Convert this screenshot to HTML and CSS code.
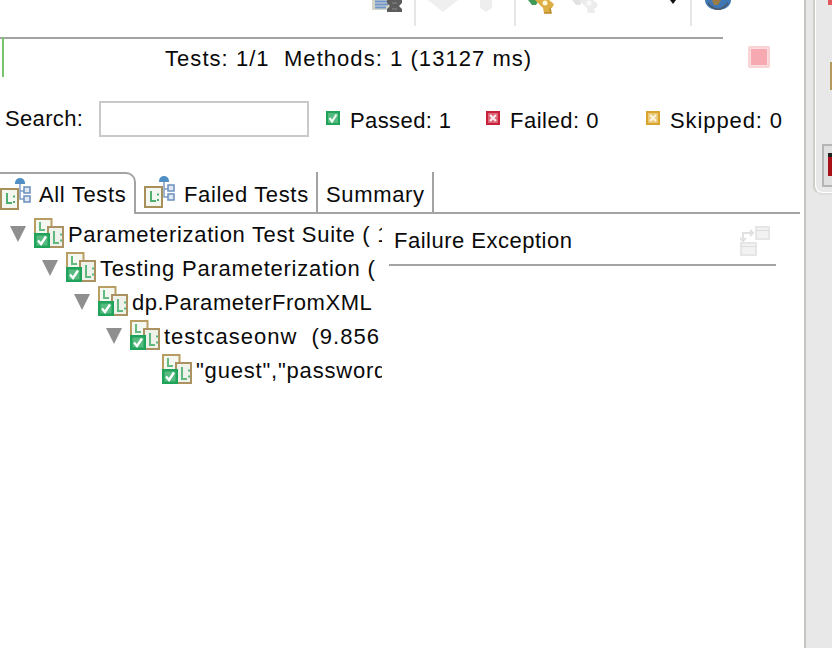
FILE: index.html
```html
<!DOCTYPE html>
<html lang="en">
<head>
<meta charset="utf-8">
<title>TestNG results</title>
<link rel="stylesheet" href="styles.css">
</head>
<body>
<svg class="defs" width="0" height="0">
  <defs>
    <symbol id="suite" viewBox="0 0 30 30">
      <rect x="1" y="1" width="16.500" height="16" fill="#f4f8f0" stroke="#b89e62" stroke-width="2"/>
      <path d="M6 4V12H11" fill="none" stroke="#63bb82" stroke-width="2"/>
      <rect x="14" y="9" width="15" height="20" fill="#eef2ea" stroke="#ab9260" stroke-width="2"/>
      <path d="M20 13V25H25M26 16.500H28M26 22.500H28" fill="none" stroke="#5fb87e" stroke-width="2"/>
      <rect x="0" y="15" width="16" height="15" fill="#1fa35a"/>
      <rect x="2.500" y="17.500" width="11" height="10" fill="#57bb80"/>
      <path d="M4 22.500L7 26L12 18.500" fill="none" stroke="#fff" stroke-width="2.400"/>
    </symbol>
    <symbol id="tabicon" viewBox="0 0 32 32">
      <rect x="1" y="11" width="17" height="20" fill="#f4f6f0" stroke="#a8905a" stroke-width="2"/>
      <path d="M7 15V25H12M13 18.500H15M13 24H15" fill="none" stroke="#4fae72" stroke-width="2"/>
      <path d="M15 5A5 5 0 0 1 25 5L25 6H15Z" fill="#4f8fc4"/>
      <path d="M20 6V21H24M20 13H24" fill="none" stroke="#7d9cc4" stroke-width="1.500"/>
      <rect x="24" y="9" width="6" height="6" fill="#dfe8f3" stroke="#6a8fbd" stroke-width="1.500"/>
      <rect x="24" y="18" width="6" height="6" fill="#dfe8f3" stroke="#6a8fbd" stroke-width="1.500"/>
    </symbol>
  </defs>
</svg>
<div class="app">
  <main class="main">
    <div class="toolbar">
      <svg class="tool tool-a" viewBox="0 0 30 12"><path d="M0 0H19V10H0Z" fill="#d4d6c8"/><path d="M3 1.500H16M3 4.500H16M3 7.500H14" stroke="#6f95cc" stroke-width="1.800"/><path d="M15 0H30V3L27 6L30 9V12H15V9L18 6L15 3Z" fill="#5c5c5c"/><path d="M20 3H25M20 9H25" stroke="#8a8a8a" stroke-width="1"/></svg>
      <span class="sep sep-a"></span>
      <svg class="tool tool-b" viewBox="0 0 30 12"><path d="M0 0H30L15 12Z" fill="#efefef"/></svg>
      <svg class="tool tool-c" viewBox="0 0 12 12"><path d="M0 0H12V8L6 12L0 8Z" fill="#eeeeee"/></svg>
      <span class="sep sep-b"></span>
      <svg class="tool tool-d" viewBox="0 0 30 14"><path d="M0 0H11L8 5H4Z" fill="#3f9a57"/><path d="M7 0H21L26 4L24 8L22 8L23 13H16L15 8Z" fill="#dcae44"/><circle cx="17" cy="3" r="2.500" fill="#fff6d8"/><path d="M22 8L23 13H16" fill="none" stroke="#b98a26" stroke-width="1.500"/></svg>
      <svg class="tool tool-e" viewBox="0 0 30 14"><path d="M0 0H11L8 5H4Z" fill="#e2e2e2"/><path d="M7 0H21L26 4L24 8L22 8L23 13H16L15 8Z" fill="#ececec"/><circle cx="17" cy="3" r="2.500" fill="#fafafa"/></svg>
      <svg class="tool tool-f" viewBox="0 0 6 4"><path d="M0 0H6L3 4Z" fill="#111"/></svg>
      <span class="sep sep-c"></span>
      <svg class="tool tool-g" viewBox="0 0 26 10"><path d="M0 0H26C26 6 20 10 13 10S0 6 0 0Z" fill="#3f77b5"/><path d="M7 0H16L13 5H9Z" fill="#9c7c45"/><path d="M3 3C6 7 9 9 13 9.500C17 9 20 7 23 3" fill="none" stroke="#4c5866" stroke-width="1.400"/></svg>
    </div>
    <div class="progress">
      <div class="summary">
        <span class="green"></span>
        <span class="counts">Tests: 1/1&nbsp;&nbsp;Methods: 1 (13127 ms)</span>
      </div>
      <span class="stop"></span>
    </div>
    <div class="search">
      <label class="search-label" for="q">Search:</label>
      <input class="search-input" id="q" type="text">
      <span class="stat stat-pass">
        <svg class="badge" viewBox="0 0 14 14"><rect width="14" height="14" fill="#1fa35a"/><rect x="2" y="2" width="10" height="10" fill="#55ba7f"/><path d="M3.500 7L6 10.500L10.500 3.500" fill="none" stroke="#eef9f1" stroke-width="2.200"/></svg>
        Passed: 1
      </span>
      <span class="stat stat-fail">
        <svg class="badge" viewBox="0 0 14 14"><rect width="14" height="14" fill="#c9213c"/><rect x="2" y="2" width="10" height="10" fill="#dc6677"/><path d="M4 4L10 10M10 4L4 10" stroke="#fbeaec" stroke-width="2.200"/></svg>
        Failed: 0
      </span>
      <span class="stat stat-skip">
        <svg class="badge" viewBox="0 0 14 14"><rect width="14" height="14" fill="#d9a32e"/><rect x="2" y="2" width="10" height="10" fill="#e9c878"/><path d="M4 4L10 10M10 4L4 10" stroke="#fdf4dc" stroke-width="2.200"/></svg>
        Skipped: 0
      </span>
    </div>
    <div class="tabs">
      <div class="tab tab-active"><svg class="tab-icon"><use href="#tabicon"/></svg>All Tests</div>
      <div class="tab tab-failed"><svg class="tab-icon"><use href="#tabicon"/></svg>Failed Tests</div>
      <div class="tab tab-summary">Summary</div>
      <div class="tab-rest"></div>
    </div>
    <div class="panes">
      <div class="tree">
        <div class="row lvl0"><span class="tri"></span><svg class="node"><use href="#suite"/></svg><span class="label">Parameterization Test Suite ( 1</span></div>
        <div class="row lvl1"><span class="tri"></span><svg class="node"><use href="#suite"/></svg><span class="label">Testing Parameterization (</span></div>
        <div class="row lvl2"><span class="tri"></span><svg class="node"><use href="#suite"/></svg><span class="label">dp.ParameterFromXML</span></div>
        <div class="row lvl3"><span class="tri"></span><svg class="node"><use href="#suite"/></svg><span class="label">testcaseonw&nbsp;&nbsp;(9.856</span></div>
        <div class="row lvl4"><span class="tri none"></span><svg class="node"><use href="#suite"/></svg><span class="label">"guest","password"</span></div>
      </div>
      <div class="detail">
        <div class="detail-head">
          <span class="detail-title">Failure Exception</span>
          <svg class="layout-icon" viewBox="0 0 30 30"><rect x="16" y="1" width="13" height="12" fill="#f2f2f2" stroke="#e6e6e6" stroke-width="2"/><path d="M16 4.500H29" stroke="#dcdcdc"/><rect x="1" y="17" width="15" height="12" fill="#f2f2f2" stroke="#e6e6e6" stroke-width="2"/><path d="M1 20.500H16" stroke="#dcdcdc"/><path d="M3 13V7H13M10 4L13 7L10 10M0 12L3 15L6 12" fill="none" stroke="#e0e0e0" stroke-width="2"/></svg>
        </div>
      </div>
    </div>
  </main>
  <aside class="side">
    <div class="side-gutter"></div>
    <div class="side-panel">
      <span class="side-red"></span>
      <span class="side-tan"></span>
      <span class="side-box"><span class="side-cap"></span><span class="side-box-in"></span></span>
    </div>
  </aside>
</div>
</body>
</html>
```

FILE: styles.css
```css
* { box-sizing: border-box; }
html, body { margin: 0; padding: 0; height: 100%; background: #fff; overflow: hidden; }
body { font-family: "Liberation Sans", Arial, sans-serif; font-size: 22px; letter-spacing: 0.5px; color: #0a0a0a; }
.defs { display: block; height: 0; }

.app { display: flex; width: 832px; height: 648px; }
.main { width: 804px; flex: none; display: flex; flex-direction: column; }

.toolbar { height: 37px; flex: none; display: flex; align-items: flex-start; padding-left: 372px; }
.tool { display: block; flex: none; }
.tool-a { width: 30px; height: 12px; }
.sep { width: 2px; height: 26px; background: #e6e6e6; flex: none; }
.sep-a { margin-left: 12px; }
.tool-b { width: 30px; height: 12px; margin-left: 12px; }
.tool-c { width: 12px; height: 12px; margin-left: 22px; }
.sep-b { margin-left: 22px; }
.tool-d { width: 30px; height: 14px; margin-left: 12px; }
.tool-e { width: 30px; height: 14px; margin-left: 14px; }
.tool-f { width: 6px; height: 4px; margin-left: 68px; }
.sep-c { margin-left: 14px; }
.tool-g { width: 26px; height: 10px; margin-left: 13px; }

.progress { height: 40px; flex: none; display: flex; align-items: flex-start; }
.summary { width: 723px; height: 40px; border-top: 2px solid #a3a3a3; display: flex; padding-left: 2px; flex: none; }
.green { width: 2px; height: 40px; margin-top: -2px; background: #79c36f; flex: none; }
.counts { margin-left: 161px; line-height: 40px; height: 38px; white-space: pre; letter-spacing: 1.05px; }
.stop { width: 22px; height: 22px; margin: 9px 0 0 25px; border: 2px solid #f8d2d5; border-radius: 2px; background: #f6a9b0; box-shadow: inset 0 0 0 1px #fbdde0; flex: none; }

.search { height: 95px; flex: none; display: flex; align-items: flex-start; padding: 24px 0 0 5px; }
.search-label { line-height: 36px; width: 94px; flex: none; letter-spacing: 0.35px; }
.search-input { width: 210px; height: 36px; border: 2px solid #c9c9c9; background: #fff; flex: none; margin: 0; padding: 0; }
.stat { display: flex; align-items: center; gap: 10px; flex: none; line-height: 40px; white-space: nowrap; }
.stat-pass { margin-left: 17px; width: 160px; letter-spacing: 0.4px; }
.stat-fail { width: 160px; }
.stat-skip { letter-spacing: 0.9px; }
.badge { width: 14px; height: 14px; flex: none; margin-bottom: 6px; }

.tabs { height: 42px; flex: none; display: flex; align-items: stretch; }
.tab { display: flex; align-items: center; white-space: nowrap; border-bottom: 2px solid #a3a3a3; flex: none; letter-spacing: 0.65px; }
.tab-active { width: 136px; border: 2px solid #a3a3a3; border-width: 2px 2px 0 0; border-top-right-radius: 10px; padding-top: 2px; }
.tab-failed { width: 182px; padding: 6px 0 0 8px; border-right: 2px solid #a3a3a3; }
.tab-summary { width: 116px; padding: 6px 0 0 8px; border-right: 2px solid #a3a3a3; }
.tab-rest { width: 366px; border-bottom: 2px solid #a3a3a3; flex: none; }
.tab-icon { width: 32px; height: 32px; margin: -2px 7px 0 0; flex: none; }
.tab-failed .tab-icon { margin: -6px 8px 0 0; }

.panes { flex: 1; display: flex; min-height: 0; }
.tree { width: 382px; flex: none; overflow: hidden; padding-top: 4px; }
.row { display: flex; align-items: center; height: 34px; white-space: nowrap; }
.lvl0 { padding-left: 10px; letter-spacing: 0.7px; }
.lvl1 { padding-left: 42px; letter-spacing: 0.77px; }
.lvl2 { padding-left: 74px; letter-spacing: 0.55px; }
.lvl3 { padding-left: 106px; letter-spacing: 1px; }
.lvl4 { padding-left: 138px; letter-spacing: 0.8px; }
.tri { width: 0; height: 0; border-left: 8px solid transparent; border-right: 8px solid transparent; border-top: 16px solid #8f8f8f; margin: -2px 8px 0 0; flex: none; }
.tri.none { border-top-color: transparent; }
.node { width: 30px; height: 30px; margin: -4px 4px 0 0; flex: none; }
.detail { flex: 1; padding-left: 7px; min-width: 0; }
.detail-head { width: 387px; height: 52px; border-bottom: 2px solid #a3a3a3; display: flex; align-items: center; justify-content: space-between; padding: 3px 6px 0 5px; }
.layout-icon { width: 30px; height: 30px; flex: none; }

.side { flex: 1; display: flex; align-items: flex-start; min-width: 0; height: 648px; background: #e8e8e8; }
.side-gutter { width: 9px; height: 648px; flex: none; border-left: 2px solid #c6c6c2; }
.side-panel { flex: 1; height: 195px; background: #e8e8e8; border-left: 2px solid #cdcdc9; border-bottom: 2px solid #dedede; box-shadow: inset 1px -1px 0 #fff; display: flex; flex-direction: column; align-items: flex-end; border-bottom-left-radius: 9px; }
.side-red { width: 4px; height: 5px; background: #e2575c; flex: none; }
.side-tan { width: 2px; height: 28px; margin-top: 57px; background: #b39a5c; flex: none; }
.side-box { width: 10px; height: 43px; margin-top: 54px; border: 2px solid #b5b5b5; border-right: 0; background: #e0e0e0; padding: 7px 0 0 4px; flex: none; display: flex; flex-direction: column; }
.side-cap { display: block; width: 4px; height: 4px; background: #222; flex: none; }
.side-box-in { display: block; width: 4px; height: 19px; background: #a80f18; flex: none; }
```
